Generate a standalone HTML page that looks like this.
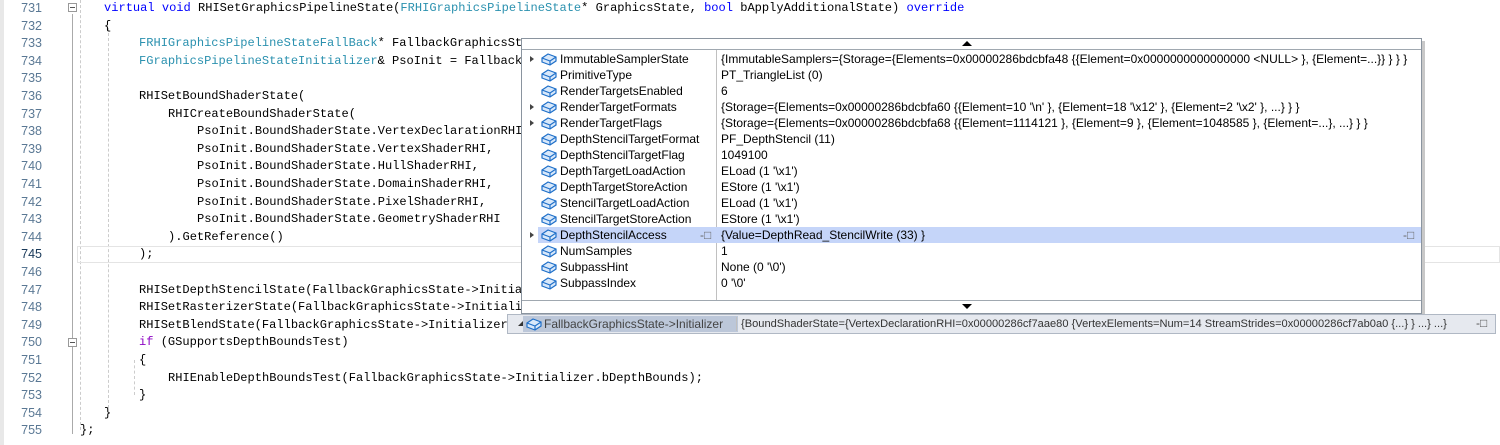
<!DOCTYPE html>
<html><head><meta charset="utf-8"><style>
*{margin:0;padding:0;box-sizing:border-box}
body{width:1500px;height:445px;background:#fff;position:relative;overflow:hidden;font-family:"Liberation Mono",monospace}
.gut{position:absolute;left:0;top:0;width:4px;height:445px;background:#e8e8e8}
.ln{position:absolute;left:14px;width:28px;text-align:right;font-size:12.5px;color:#5a7894;height:17.6px;line-height:17.6px;font-family:"Liberation Sans",sans-serif}
.code{position:absolute;font-size:12.05px;height:17.6px;line-height:17.6px;white-space:pre;color:#000}
.t{color:#2b91af}.k{color:#0000ff}.p{color:#8f08c4}
.fold{position:absolute;left:68px;width:9px;height:9px;border:1px solid #999;background:#fff}
.fold:after{content:"";position:absolute;left:1px;top:3px;width:5px;height:1px;background:#555}
.vl{position:absolute;border-left:1px dashed #ccc}
.pop{position:absolute;left:521px;top:38px;width:901px;height:276px;background:#fff;border:1px solid #8a949f;box-shadow:3px 3px 0 #c8c8c8}
.row{position:absolute;left:0;height:16px;width:899px;font-family:"Liberation Sans",sans-serif;font-size:12px;line-height:16px}
.row .n{position:absolute;left:38px}
.row .v{position:absolute;left:199px;white-space:nowrap}
.row svg{position:absolute;left:19px;top:1px}
.arr{position:absolute;left:8px;top:5px;width:0;height:0;border-left:4px solid #444;border-top:3px solid transparent;border-bottom:3px solid transparent}
.par{position:absolute;left:507px;top:314px;width:989px;height:20px;background:#e6e9ef;border:1px solid #b0b8c4;font-family:"Liberation Sans",sans-serif;font-size:12px;line-height:18px}
</style></head><body>
<div class="gut"></div>
<div class="vl" style="left:72px;top:14px;height:420px;border-left:1px solid #aaa"></div>
<div class="vl" style="left:80px;top:0;height:430px"></div>
<div class="vl" style="left:108px;top:28px;height:380px"></div>
<div class="vl" style="left:134px;top:360px;height:35px"></div>
<div style="position:absolute;left:77px;top:246px;width:1423px;height:17px;border:1px solid #e4e4e4"></div>
<div class="fold" style="top:3px"></div>
<div class="fold" style="top:338px"></div>

<div id="lines"></div>
<script>
var L=[
[104,'<span class="k">virtual void</span> RHISetGraphicsPipelineState(<span class="t">FRHIGraphicsPipelineState</span>* GraphicsState, <span class="k">bool</span> bApplyAdditionalState) <span class="k">override</span>'],
[104,'{'],
[139,'<span class="t">FRHIGraphicsPipelineStateFallBack</span>* FallbackGraphicsState = '],
[139,'<span class="t">FGraphicsPipelineStateInitializer</span>&amp; PsoInit = FallbackGraphicsState'],
[139,''],
[139,'RHISetBoundShaderState('],
[168,'RHICreateBoundShaderState('],
[197,'PsoInit.BoundShaderState.VertexDeclarationRHI,'],
[197,'PsoInit.BoundShaderState.VertexShaderRHI,'],
[197,'PsoInit.BoundShaderState.HullShaderRHI,'],
[197,'PsoInit.BoundShaderState.DomainShaderRHI,'],
[197,'PsoInit.BoundShaderState.PixelShaderRHI,'],
[197,'PsoInit.BoundShaderState.GeometryShaderRHI'],
[168,').GetReference()'],
[139,');'],
[139,''],
[139,'RHISetDepthStencilState(FallbackGraphicsState-&gt;Initializer.DepthStencilState'],
[139,'RHISetRasterizerState(FallbackGraphicsState-&gt;Initializer.RasterizerState'],
[139,'RHISetBlendState(FallbackGraphicsState-&gt;Initializer.BlendState'],
[139,'<span class="p">if</span> (GSupportsDepthBoundsTest)'],
[139,'{'],
[168,'RHIEnableDepthBoundsTest(FallbackGraphicsState-&gt;Initializer.bDepthBounds);'],
[139,'}'],
[104,'}'],
[80,'};']];
var h='';
for(var i=0;i<L.length;i++){var t=i*17.6;
h+='<div class="ln" style="top:'+t+'px;'+(i==14?'color:#1a3a5a':'')+'">'+(731+i)+'</div>';
h+='<div class="code" style="left:'+L[i][0]+'px;top:'+t+'px">'+L[i][1]+'</div>';}
document.getElementById('lines').innerHTML=h;
</script>

<div class="pop">
<div style="position:absolute;left:0;top:10px;width:899px;border-top:1px solid #a0a8b0"></div>
<div style="position:absolute;left:440px;top:2px;width:0;height:0;border-left:5px solid transparent;border-right:5px solid transparent;border-bottom:5px solid #000"></div>
<div style="position:absolute;left:194px;top:11px;height:250px;border-left:1px solid #c0c0c0"></div>
<div style="position:absolute;left:0;top:261px;width:899px;border-top:1px solid #a0a8b0"></div>
<div style="position:absolute;left:440px;top:265px;width:0;height:0;border-left:5px solid transparent;border-right:5px solid transparent;border-top:5px solid #000"></div>
<div id="rows"></div>
</div>
<div class="par">
<div style="position:absolute;left:10px;top:6px;width:0;height:0;border-left:5px solid transparent;border-bottom:5px solid #333"></div>
<div style="position:absolute;left:15px;top:1px;width:215px;height:16px;background:#bcc7d9"></div>
<svg style="position:absolute;left:18px;top:2px" width="16" height="14" viewBox="0 0 16 14"><path d="M1 6 L7 2 L15 5 L15 9 L9 13 L1 10 Z" fill="#d8e8fa" stroke="#1e6fc9" stroke-width="1.2"/><path d="M1 6 L9 9 L15 5 M9 9 L9 13" fill="none" stroke="#1e6fc9" stroke-width="1.2"/></svg>
<span style="position:absolute;left:36px;color:#444">FallbackGraphicsState-&gt;Initializer</span>
<div style="position:absolute;left:228px;top:2px;height:14px;border-left:1px solid #c0c0c0"></div>
<span style="position:absolute;left:233px;color:#333;white-space:nowrap;font-size:11.1px">{BoundShaderState={VertexDeclarationRHI=0x00000286cf7aae80 {VertexElements=Num=14 StreamStrides=0x00000286cf7ab0a0 {...} } ...} ...}</span>
<span style="position:absolute;left:968px;top:-1px;color:#555">-□</span>
</div>
<script>
var R=[[1,'ImmutableSamplerState','{ImmutableSamplers={Storage={Elements=0x00000286bdcbfa48 {{Element=0x0000000000000000 &lt;NULL&gt; }, {Element=...}} } } }'],
[0,'PrimitiveType','PT_TriangleList (0)'],[0,'RenderTargetsEnabled','6'],
[1,'RenderTargetFormats',"{Storage={Elements=0x00000286bdcbfa60 {{Element=10 '\\n' }, {Element=18 '\\x12' }, {Element=2 '\\x2' }, ...} } }"],
[1,'RenderTargetFlags','{Storage={Elements=0x00000286bdcbfa68 {{Element=1114121 }, {Element=9 }, {Element=1048585 }, {Element=...}, ...} } }'],
[0,'DepthStencilTargetFormat','PF_DepthStencil (11)'],[0,'DepthStencilTargetFlag','1049100'],
[0,'DepthTargetLoadAction',"ELoad (1 '\\x1')"],[0,'DepthTargetStoreAction',"EStore (1 '\\x1')"],
[0,'StencilTargetLoadAction',"ELoad (1 '\\x1')"],[0,'StencilTargetStoreAction',"EStore (1 '\\x1')"],
[1,'DepthStencilAccess','{Value=DepthRead_StencilWrite (33) }'],[0,'NumSamples','1'],
[0,'SubpassHint',"None (0 '\\0')"],[0,'SubpassIndex',"0 '\\0'"]];
var ic='<svg width="16" height="14" viewBox="0 0 16 14"><path d="M1 6 L7 2 L15 5 L15 9 L9 13 L1 10 Z" fill="#d8e8fa" stroke="#1e6fc9" stroke-width="1.2"/><path d="M1 6 L9 9 L15 5 M9 9 L9 13" fill="none" stroke="#1e6fc9" stroke-width="1.2"/></svg>';
var h='';
for(var i=0;i<R.length;i++){var hl=i==11;
h+='<div class="row" style="top:'+(12+i*16)+'px">'+(hl?'<div style="position:absolute;left:16px;top:0;width:883px;height:16px;background:#c5d5f9"></div>':'')+(R[i][0]?'<div class="arr"></div>':'')+ic+'<span class="n">'+R[i][1]+'</span><span class="v">'+R[i][2]+'</span>'+(hl?'<span style="position:absolute;left:178px;color:#666">-□</span><span style="position:absolute;left:881px;color:#666">-□</span>':'')+'</div>';}
document.getElementById('rows').innerHTML=h;
</script>
</body></html>
